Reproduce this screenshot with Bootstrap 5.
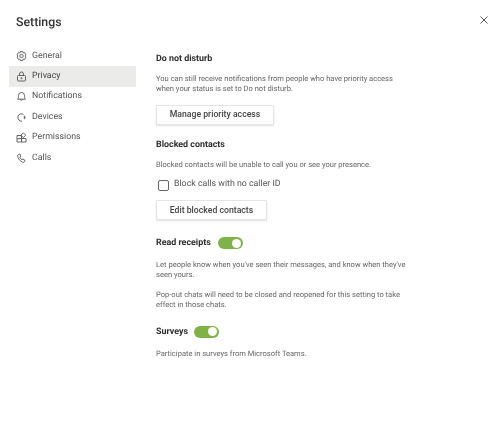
<!doctype html>
<html lang="en"><head><meta charset="utf-8"><title>Settings</title>
<link href="https://cdn.jsdelivr.net/npm/bootstrap@5.3.0/dist/css/bootstrap.min.css" rel="stylesheet">
<style>
html,body{height:100%;background:#fff}
body{font-family:Roboto,"Noto Sans",sans-serif;color:#3a3a3a;overflow:hidden;text-rendering:geometricPrecision}
.shell{width:500px;height:440px;padding-top:14px;filter:blur(.35px)}
.topbar{padding:0 11px 0 16px;height:18px}
.title{font-size:12.3px;font-weight:500;color:#333;margin:0;line-height:18px}
.closer{width:10px;height:10px;color:#555;margin-top:1px;display:block}
.side{width:127px;margin:14px 0 0 9px;flex:none}
.sidelink{height:20.4px;padding-left:7px;gap:5px;font-size:8.8px;color:#555;text-decoration:none}
.sidelink.on{background:#ebebea;color:#444}
.sidelink svg{width:11px;height:11px;flex:none;fill:none;stroke:#555;stroke-width:.9}
.pane{margin:21px 0 0 20px;width:320px}
.head{font-size:8.9px;font-weight:700;color:#2d2d2d;margin:0;line-height:12px}
.note{font-size:7.55px;line-height:10.4px;color:#666;margin:0}
.gap-a{margin-top:9px}.gap-b{margin-top:10px}.gap-c{margin-top:14px}.gap-d{margin-top:8.800px}
.gap-e{margin-top:17px}.gap-f{margin-top:11px}.gap-g{margin-top:9px}.gap-h{margin-top:15px}
.pushbtn{display:block;font-size:8.7px;font-weight:500;color:#444;background:#fff;border:1px solid #e4e4e4;box-shadow:0 1px 2px rgba(0,0,0,.13);border-radius:1px;height:20px;line-height:17px;padding:0 12px}
.btn-wide{width:118px}.btn-narrow{width:111px}
.tickrow{margin:9px 0 0 2px;height:12px}
.tick{width:11px;height:11px;border:1px solid #666;border-radius:2px;flex:none}
.ticktext{font-size:8.8px;color:#555;margin-left:5px}
.toggle{width:25px;height:12px;border-radius:6px;background:#7fb347;padding:1.500px 2px;justify-content:flex-end;flex:none}
.toggle span{width:9px;height:9px;border-radius:50%;background:#fff;display:block}
.after-rr{margin-left:7px}.after-sv{margin-left:6px}
</style></head>
<body>
<div class="shell">
<div class="topbar d-flex justify-content-between align-items-start">
<h1 class="title">Settings</h1>
<svg class="closer" viewBox="0 0 10 10"><path d="M1.500 1.500l7 7M8.500 1.500l-7 7" stroke="currentColor" stroke-width="1" fill="none"/></svg>
</div>
<div class="d-flex">
<nav class="side">
<a class="sidelink d-flex align-items-center" href="#"><svg viewBox="0 0 11 11"><path d="M4.200 .6h2.600l.4 1.300 1.400-.3 1.300 2.300-.9 1.100.9 1.100-1.300 2.300-1.400-.3-.4 1.300H4.200l-.4-1.300-1.400.3L1.100 6.100 2 5 1.100 3.900l1.300-2.300 1.400.3z"/><circle cx="5.500" cy="5" r="1.700"/></svg>General</a>
<a class="sidelink on d-flex align-items-center" href="#"><svg viewBox="0 0 11 11"><rect x="1.500" y="4.500" width="8" height="5.500" rx="1"/><path d="M3.500 4.500V3a2 2 0 0 1 4 0v1.500"/><circle cx="5.500" cy="7.200" r=".6"/></svg>Privacy</a>
<a class="sidelink d-flex align-items-center" href="#"><svg viewBox="0 0 11 11"><path d="M1.500 8.200c1-1 1-2 1-3.700a3 3 0 0 1 6 0c0 1.700 0 2.700 1 3.700zM4.300 8.500a1.300 1.300 0 0 0 2.400 0"/></svg>Notifications</a>
<a class="sidelink d-flex align-items-center" href="#"><svg viewBox="0 0 11 11"><path d="M7.600 2.800A3.300 3.300 0 0 0 2 4.500c-.3 2 .4 3.500 2 4.300.6.400 1.200.5 2 .4"/><path d="M8.300 4c1.100.4 1.100 2.400 0 2.800z"/></svg>Devices</a>
<a class="sidelink d-flex align-items-center" href="#"><svg viewBox="0 0 11 11"><path d="M1 3.500h4.500V10H1zM5.500 6.500H10V10H5.500zM1 6.700h4.500M7.300 .8l2.400 2.400-2.400 2.400-2.400-2.400z"/></svg>Permissions</a>
<a class="sidelink d-flex align-items-center" href="#"><svg viewBox="0 0 11 11"><path d="M2.300 1.500 3.800 1l1 2.200-1 .9c.3 1 1.100 2 2.200 2.600l1-.7 2 1.400-.6 1.300c-.5.700-1.400.8-2.300.4C3.500 7.500 1.800 5 1.600 3c0-.7.200-1.200.7-1.500z"/></svg>Calls</a>
</nav>
<main class="pane">
<h2 class="head">Do not disturb</h2>
<p class="note gap-a">You can still receive notifications from people who have priority access<br>when your status is set to Do not disturb.</p>
<button class="pushbtn btn-wide gap-b" type="button">Manage priority access</button>
<h2 class="head gap-c">Blocked contacts</h2>
<p class="note gap-d">Blocked contacts will be unable to call you or see your presence.</p>
<div class="tickrow d-flex align-items-center"><span class="tick"></span><span class="ticktext">Block calls with no caller ID</span></div>
<button class="pushbtn btn-narrow gap-a" type="button">Edit blocked contacts</button>
<div class="d-flex align-items-center gap-e"><h2 class="head">Read receipts</h2><div class="toggle after-rr d-flex align-items-center"><span></span></div></div>
<p class="note gap-f">Let people know when you've seen their messages, and know when they've<br>seen yours.</p>
<p class="note gap-g">Pop-out chats will need to be closed and reopened for this setting to take<br>effect in those chats.</p>
<div class="d-flex align-items-center gap-h"><h2 class="head">Surveys</h2><div class="toggle after-sv d-flex align-items-center"><span></span></div></div>
<p class="note gap-f">Participate in surveys from Microsoft Teams.</p>
</main>
</div>
</div>
<script src="https://cdn.jsdelivr.net/npm/bootstrap@5.3.0/dist/js/bootstrap.bundle.min.js"></script>
</body></html>
